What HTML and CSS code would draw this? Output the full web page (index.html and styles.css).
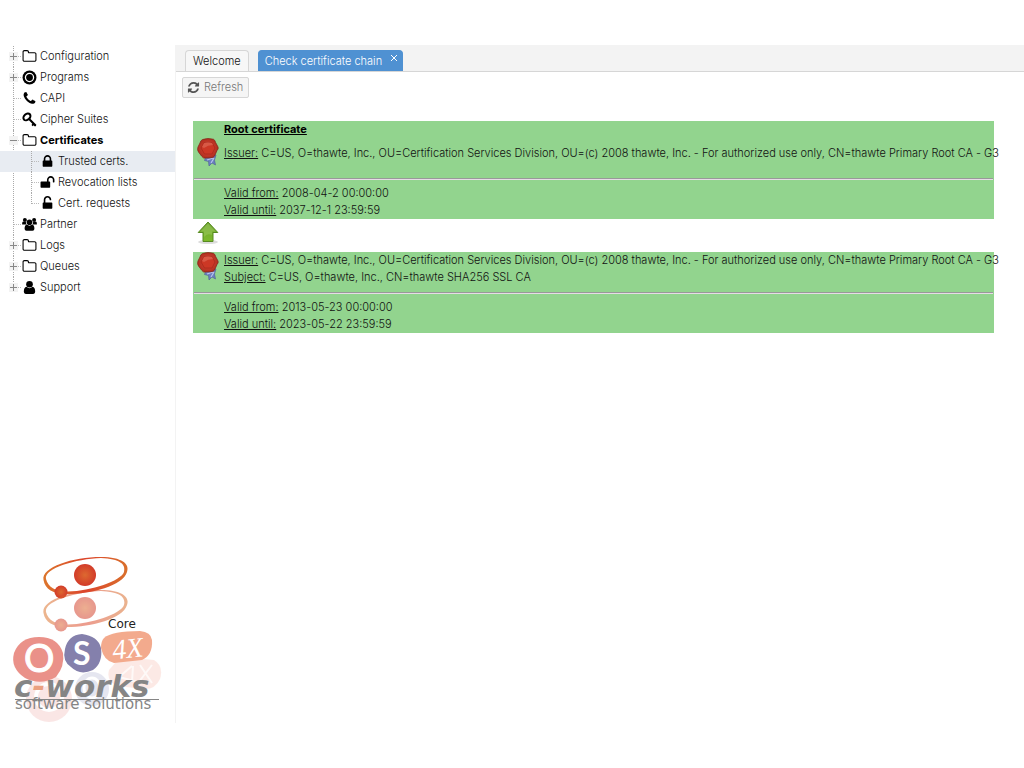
FILE: index.html
```html
<!DOCTYPE html>
<html lang="en">
<head>
<meta charset="utf-8">
<meta name="viewport" content="width=device-width, initial-scale=1">
<title>OS4X Core</title>
<link rel="stylesheet" href="styles.css">
</head>
<body>

<svg class="defs" aria-hidden="true">
<symbol id="folder" viewBox="0 0 1792 1792"><path d="M1600 1312v-704q0-40-28-68t-68-28h-704q-40 0-68-28t-28-68v-64q0-40-28-68t-68-28h-320q-40 0-68 28t-28 68v960q0 40 28 68t68 28h1216q40 0 68-28t28-68zm128-704v704q0 92-66 158t-158 66h-1216q-92 0-158-66t-66-158v-960q0-92 66-158t158-66h320q92 0 158 66t66 158v32h672q92 0 158 66t66 158z"/></symbol>
<symbol id="phone" viewBox="0 0 1792 1792"><path d="M1600 1240q0 27-10 70.5t-21 68.5q-21 50-122 106-94 51-186 51-27 0-52.5-3.5t-57.5-12.5-47.5-14.5-55.5-20.5-49-18q-98-35-175-83-128-79-264.5-215.5t-215.5-264.5q-48-77-83-175-3-9-18-49t-20.5-55.5-14.5-47.5-12.5-57.5-3.5-52.5q0-92 51-186 56-101 106-122 25-11 68.5-21t70.5-10q14 0 21 3 18 6 53 76 11 19 30 54t35 63.5 31 53.5q3 4 17.5 25t21.5 35.5 7 28.5q0 20-28.5 50t-62 55-62 53-28.5 46q0 9 5 22.5t8.5 20.5 14 24 11.5 19q76 137 174 235t235 174q2 1 19 11.5t24 14 20.5 8.5 22.5 5q18 0 46-28.5t53-62 55-62 50-28.5q14 0 28.5 7t35.5 21.5 25 17.5q25 15 53.5 31t63.5 35 54 30q70 35 76 53 3 7 3 21z"/></symbol>
<symbol id="lock" viewBox="0 0 1792 1792"><path d="M640 768h512v-192q0-106-75-181t-181-75-181 75-75 181v192zm832 96v576q0 40-28 68t-68 28h-960q-40 0-68-28t-28-68v-576q0-40 28-68t68-28h32v-192q0-184 132-316t316-132 316 132 132 316v192h32q40 0 68 28t28 68z"/></symbol>
<symbol id="unlock" viewBox="0 0 1792 1792"><path d="M1728 576v256q0 26-19 45t-45 19h-64q-26 0-45-19t-19-45v-256q0-106-75-181t-181-75-181 75-75 181v192h96q40 0 68 28t28 68v576q0 40-28 68t-68 28h-960q-40 0-68-28t-28-68v-576q0-40 28-68t68-28h672v-192q0-185 131.5-316.5t316.5-131.5 316.5 131.5 131.5 316.5z"/></symbol>
<symbol id="unlockalt" viewBox="0 0 1792 1792"><path d="M1376 768q40 0 68 28t28 68v576q0 40-28 68t-68 28h-960q-40 0-68-28t-28-68v-576q0-40 28-68t68-28h32v-320q0-185 131.5-316.5t316.5-131.5 316.5 131.5 131.5 316.5q0 26-19 45t-45 19h-64q-26 0-45-19t-19-45q0-106-75-181t-181-75-181 75-75 181v320h736z"/></symbol>
<symbol id="refresh" viewBox="0 0 1792 1792"><path d="M1639 1056q0 5-1 7-64 268-268 434.500t-478 166.500q-146 0-282.500-55t-243.500-157l-129 129q-19 19-45 19t-45-19-19-45v-448q0-26 19-45t45-19h448q26 0 45 19t19 45-19 45l-137 137q71 66 161 102t187 36q134 0 250-65t186-179q11-17 53-117 8-23 30-23h192q13 0 22.500 9.500t9.500 22.500zm25-800v448q0 26-19 45t-45 19h-448q-26 0-45-19t-19-45 19-45l138-138q-148-137-349-137-134 0-250 65t-186 179q-11 17-53 117-8 23-30 23h-199q-13 0-22.500-9.500t-9.500-22.500v-7q65-268 270-434.500t480-166.500q146 0 284 55.500t245 156.500l130-129q19-19 45-19t45 19 19 45z"/></symbol>
<symbol id="target" viewBox="0 0 14 14"><circle cx="7" cy="7" r="6.500"/><circle cx="7" cy="7" r="3.800" fill="none" stroke="#fff" stroke-width="1.200"/></symbol>
<symbol id="key" viewBox="0 0 14 14"><ellipse cx="4.600" cy="4.600" rx="3.700" ry="2.700" transform="rotate(-42 4.600 4.600)" fill="none" stroke="#000" stroke-width="1.900"/><path d="M6 7.200L7.300 5.900 13.400 11.900 12.900 13.300 11.600 13.200 10.900 12.400 10 13.200 8.900 12.200 9.600 11z"/></symbol>
<symbol id="user" viewBox="0 0 14 14"><circle cx="7" cy="4" r="3.100"/><path d="M4.200 6.400Q7 8.800 9.800 6.400Q12.300 7 12.300 11Q12.300 13 10.500 13H3.500Q1.700 13 1.700 11Q1.700 7 4.200 6.400z"/></symbol>
<symbol id="users" viewBox="0 0 15 14"><circle cx="2.900" cy="2.400" r="2"/><circle cx="12.100" cy="2.400" r="2"/><path d="M.2 6.900Q-.1 4 1.300 4Q2.900 5 4 4.200Q3.700 6 4.600 6.900zM14.800 6.900Q15.100 4 13.700 4Q12.100 5 11 4.200Q11.300 6 10.400 6.900z"/><circle cx="7.500" cy="4.800" r="2.800"/><path d="M4.900 7.100Q7.500 9.200 10.100 7.100Q12.400 7.600 12.400 11.200Q12.400 13.300 10.600 13.300H4.400Q2.600 13.300 2.600 11.200Q2.600 7.600 4.900 7.100z"/></symbol>
<symbol id="seal" viewBox="0 0 22 28">
<path d="M9 18L19 17 17.500 22 18.500 27 15 25 12 28 11.500 23.500 7.500 22.500z" fill="#6b7fc0" stroke="#4b5c93" stroke-width=".6"/><path d="M10 22L16 20M14 25L17 20" stroke="#b7c5ed" stroke-width="1.200"/>
<path d="M5.500 1.500Q11-.3 16.500 1.300Q18 2 18.600 4.500L21 9Q21.700 11 20 12.500L18 17Q17 20 14 19.700L9 20Q6 20.700 4.500 18L1.500 14Q0 12 1 9L3 5Q3.500 2.500 5.500 1.500z" fill="url(#wax)" stroke="#84281b" stroke-width=".8"/>
<path d="M7 4.500H15L18 10 15 16H7.500L4 10z" fill="#cc3825" stroke="#b02c1e" stroke-width="1"/><path d="M7 5Q11 3.500 15 5L16 7Q11 7 7 10L5 9z" fill="#e0705c" opacity=".6"/>
</symbol>
<symbol id="up" viewBox="0 0 22 24"><ellipse cx="11" cy="21" rx="10" ry="2" fill="#ddd"/><path d="M11 1L20.800 11.500H16V20.500H6V11.500H1.200z" fill="url(#leaf)" stroke="#568a20" stroke-linejoin="round"/><path d="M11 2.600L18.500 10.600H15V14Q10 12 7 16V10.600H3.500z" fill="#9dcb5f" opacity=".5"/></symbol>
<radialGradient id="wax"><stop offset="0" stop-color="#dd4a35"/><stop offset="1" stop-color="#b22f20"/></radialGradient>
<linearGradient id="leaf" x2="0" y2="1"><stop offset="0" stop-color="#6ea033"/><stop offset="1" stop-color="#7dbb2a"/></linearGradient>
</svg>

<div class="app">

<nav class="side">
<ul class="tree">
<li><a href="#"><i class="exp plus"></i><svg><use href="#folder"/></svg>Configuration</a></li>
<li><a href="#"><i class="exp plus"></i><svg><use href="#target"/></svg>Programs</a></li>
<li><a href="#"><i class="exp"></i><svg><use href="#phone"/></svg>CAPI</a></li>
<li><a href="#"><i class="exp"></i><svg><use href="#key"/></svg>Cipher Suites</a></li>
<li><a href="#" class="open"><i class="exp minus"></i><svg><use href="#folder"/></svg>Certificates</a>
<ul>
<li><a href="#" class="sel"><i class="exp"></i><svg><use href="#lock"/></svg>Trusted certs.</a></li>
<li><a href="#"><i class="exp"></i><svg><use href="#unlock"/></svg>Revocation lists</a></li>
<li><a href="#"><i class="exp"></i><svg><use href="#unlockalt"/></svg>Cert. requests</a></li>
</ul>
</li>
<li><a href="#"><i class="exp"></i><svg><use href="#users"/></svg>Partner</a></li>
<li><a href="#"><i class="exp plus"></i><svg><use href="#folder"/></svg>Logs</a></li>
<li><a href="#"><i class="exp plus"></i><svg><use href="#folder"/></svg>Queues</a></li>
<li><a href="#"><i class="exp plus"></i><svg><use href="#user"/></svg>Support</a></li>
</ul>

<svg class="logo" viewBox="0 0 175 172" role="img" aria-label="OS4X Core, c-works software solutions">
<defs>
<radialGradient id="sun"><stop offset="0" stop-color="#dd6930"/><stop offset="1" stop-color="#d23b29"/></radialGradient>
<linearGradient id="ring"><stop offset="0" stop-color="#dc762c"/><stop offset=".5" stop-color="#dc452c"/><stop offset="1" stop-color="#d9702c"/></linearGradient>
<g id="orbit">
<path fill="url(#ring)" fill-rule="evenodd" d="M43.500 29C41 16 73 6 101 6C122 6 130 13 127 21C123 35 91 43 67 43C53 43 45 38 43.500 29zM46 28C48 36 55 40.500 68 40.500C91 40 121 30 124 21C126 13 120 8 101 7C76 8 44 17 46 28z"/>
<circle cx="85" cy="24" r="11" fill="url(#sun)"/>
<circle cx="61" cy="41" r="6.500" fill="url(#sun)"/>
</g>
</defs>
<use href="#orbit"/>
<use href="#orbit" y="33" opacity=".53"/>
<text x="108" y="77" class="core">Core</text>
<g opacity=".12">
<circle cx="49" cy="148" r="23" fill="#d93b30"/><circle cx="49" cy="146" r="13" fill="none" stroke="#fff" stroke-width="4"/>
<circle cx="92" cy="138" r="17" fill="#35388a"/><ellipse cx="92" cy="137" rx="8" ry="10" fill="none" stroke="#fff" stroke-width="3"/>
<path d="M116 111Q132 106 154 109Q164 115 160 128Q155 139 143 138L118 135Q106 131 109 119z" fill="#ee5535"/>
</g>
<path class="ghost" d="M132 115L119 126L138 131M133 115L132 131M140 114L152 132M152 114L138 132"/>
<path d="M14 102Q20 86 39 86Q58 86 63 102Q65 115 56 126Q41 135 25 127Q10 117 14 102z" fill="#ea9189"/>
<text x="24" y="121" class="o">O</text>
<path d="M65 98Q68 84 82 83Q98 85 101 97Q103 112 93 119Q80 125 71 116Q62 110 65 98z" fill="#8480ac"/>
<text x="73" y="114" class="s">S</text>
<path d="M104 87Q112 80 140 80Q151 81 152 89Q153 104 142 109L114 112Q104 110 101 97Q101 90 104 87z" fill="#f3aa8d"/>
<text x="112" y="107" class="x4" transform="rotate(-6 127 97)">4X</text>
<text x="14" y="146" class="cw">c<tspan class="dash">-</tspan>works</text>
<path d="M15 148.500H159" stroke="#858585"/>
<text x="15" y="158" class="sw">software solutions</text>
</svg>
</nav>

<main>
<div class="tabs">
<button class="tab">Welcome</button>
<div class="tab on"><button>Check certificate chain</button><button class="close" aria-label="Close tab"><svg viewBox="0 0 8 8"><path d="M1 1L7 7M7 1L1 7"/></svg></button></div>
</div>
<div class="bar">
<button class="refresh"><svg><use href="#refresh"/></svg>Refresh</button>
</div>

<div class="chain">
<section class="cert">
<div class="head root">
<svg><use href="#seal"/></svg>
<div>
<h2>Root certificate</h2>
<p><u>Issuer:</u> C=US, O=thawte, Inc., OU=Certification Services Division, OU=(c) 2008 thawte, Inc. - For authorized use only, CN=thawte Primary Root CA - G3</p>
</div>
</div>
<hr>
<div class="valid">
<p><u>Valid from:</u> 2008-04-2 00:00:00</p>
<p><u>Valid until:</u> 2037-12-1 23:59:59</p>
</div>
</section>
<svg class="up"><use href="#up"/></svg>
<section class="cert">
<div class="head">
<svg><use href="#seal"/></svg>
<div>
<p><u>Issuer:</u> C=US, O=thawte, Inc., OU=Certification Services Division, OU=(c) 2008 thawte, Inc. - For authorized use only, CN=thawte Primary Root CA - G3</p>
<p><u>Subject:</u> C=US, O=thawte, Inc., CN=thawte SHA256 SSL CA</p>
</div>
</div>
<hr>
<div class="valid">
<p><u>Valid from:</u> 2013-05-23 00:00:00</p>
<p><u>Valid until:</u> 2023-05-22 23:59:59</p>
</div>
</section>
</div>
</main>

</div>
</body>
</html>
```
FILE: styles.css
```css
*{box-sizing:border-box;}
body{margin:0;font:300 11px/17px Inter,"Liberation Sans",sans-serif;color:#111;background:#fff;}
button{font:inherit;color:inherit;border:none;background:none;padding:0;cursor:pointer;}
p,h2,ul{margin:0;padding:0;}
.defs{position:absolute;width:0;height:0;}
.app{display:flex;min-height:100vh;padding:45px 0;}

.side{display:flex;flex-direction:column;justify-content:space-between;flex:0 0 176px;border-right:1px solid #f3f3f3;}
.tree{padding-top:1px;list-style:none;}
.tree ul{list-style:none;}
.tree li{position:relative;}
.tree li::before{content:"";position:absolute;left:13px;top:0;bottom:0;border-left:1px dotted #aaa;}
.tree li li::before{left:31px;}
.tree li:last-child::before{bottom:auto;height:11px;}
.tree a{display:flex;align-items:center;height:21px;padding-left:9px;color:#111;text-decoration:none;white-space:nowrap;}
.tree li li a{padding-left:27px;}
.tree a svg{width:15px;height:15px;margin-right:3px;}
.tree a.open{font-weight:bold;color:#000;}
.tree a.sel{background:#e8ecf2;}
.exp{position:relative;flex:0 0 13px;height:9px;background:linear-gradient(90deg,#bbb 50%,transparent 50%) 5px 4px/2px 1px repeat-x;background-clip:content-box;padding-left:5px;}
.plus::before,.minus::before{content:"";position:absolute;left:0;top:0;width:9px;height:9px;background:linear-gradient(#888,#888) center/7px 1px no-repeat,#f3f3f3;}
.plus::after{content:"";position:absolute;left:4px;top:1px;width:1px;height:7px;background:#888;}

.logo{width:100%;height:172px;}
.core{font:12px "DejaVu Sans",sans-serif;fill:#222;}
.o{font:38px Lato,sans-serif;fill:#fff;stroke:#fff;}
.s{font:bold 32px Lato,sans-serif;fill:#fff;}
.x4{font:italic 28px "Liberation Serif",serif;fill:#fff;}
.ghost{fill:none;stroke:#fff;stroke-width:2;opacity:.7;}
.cw{font:italic bold 31px "DejaVu Sans",sans-serif;fill:#858585;}
.dash{fill:#eaa080;}
.sw{font:15px "DejaVu Sans",sans-serif;fill:#858585;}

main{flex:1;min-width:0;}
.tabs{display:flex;align-items:flex-end;gap:9px;height:27px;padding-left:9px;background:#f3f3f3;border-bottom:1px solid #d6d6d6;}
.tab{height:21px;padding:0 7px;border:1px solid #d6d6d6;border-bottom:none;border-radius:4px 4px 0 0;background:#f7f7f7;}
.tab.on{display:flex;gap:8px;padding:0 4px 0 6px;color:#fff;background:#4f91d2;border-color:#4f91d2;}
.close{align-self:flex-start;width:8px;height:14px;}
.close svg{display:block;width:8px;height:8px;fill:none;stroke:#fff;}
.bar{padding:5px 6px;}
.refresh{display:flex;align-items:center;gap:4px;height:21px;padding:0 5px 0 4px;border:1px solid #d6d6d6;border-radius:2px;background:#f5f5f5;color:#777;}
.refresh svg{width:13px;height:13px;fill:#555;}

.chain{margin:18px 30px 0 17px;}
.cert{background:#92d48e;}
.head{display:flex;align-items:flex-start;gap:5px;padding:0 0 6px 4px;white-space:nowrap;}
.head svg{width:22px;height:28px;flex:none;}
.root{padding-bottom:12px;}
.root svg{margin-top:17px;}
h2{font-size:11px;line-height:17px;margin-bottom:7px;text-decoration:underline;color:#000;}
hr{margin:0 1px 5px;border:none;border-top:1px solid #999;border-bottom:1px solid #e6dce6;}
.valid{padding-left:31px;}
.up{display:block;width:22px;height:24px;margin:2px 0 7px 4px;}
```
